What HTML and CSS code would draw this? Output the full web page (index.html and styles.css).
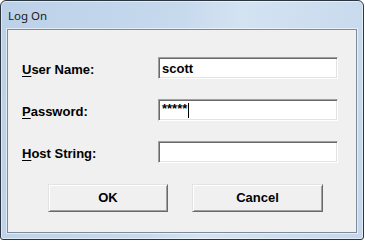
FILE: index.html
```html
<!DOCTYPE html>
<html>
<head>
<meta charset="utf-8">
<link rel="stylesheet" href="styles.css">
</head>
<body>
<div class="window">
  <div class="titlebar">Log On</div>
  <div class="client">
    <div class="form">
      <label class="label"><u>U</u>ser Name:</label>
      <div class="field">scott</div>
      <label class="label"><u>P</u>assword:</label>
      <div class="field"><span class="stars">*****</span><span class="caret"></span></div>
      <label class="label"><u>H</u>ost String:</label>
      <div class="field"></div>
    </div>
    <div class="buttons">
      <div class="btn btn-ok">OK</div>
      <div class="btn btn-cancel">Cancel</div>
    </div>
  </div>
</div>
</body>
</html>
```

FILE: styles.css
```css
html, body {
  margin: 0;
  padding: 0;
  background: #ffffff;
}
.window {
  width: 364px;
  height: 240px;
  border: 1px solid #2c3641;
  border-radius: 6px 6px 3px 3px;
  background: linear-gradient(100deg, #bcd1e8 0%, #c6d9ed 45%, #d4e3f2 60%, #c4d7ec 100%);
  box-shadow: inset 0 0 0 1px rgba(255,255,255,0.5);
  padding: 0 6px 6px 6px;
  box-sizing: border-box;
  display: flex;
  flex-direction: column;
}
.titlebar {
  height: 28px;
  flex: none;
  box-sizing: border-box;
  padding: 8px 0 0 1px;
  font-family: "Noto Sans", "Open Sans", sans-serif;
  font-size: 11.5px;
  line-height: 14px;
  color: #1a1a1a;
}
.client {
  flex: 1;
  background: #f0f0f0;
  border: 1px solid #7d8a97;
  box-shadow: 0 0 0 1px rgba(255,255,255,0.55);
  font-family: "Liberation Sans", Arial, sans-serif;
  font-weight: bold;
  font-size: 13px;
  color: #000;
}
.form {
  display: grid;
  grid-template-columns: 136px 180px;
  grid-auto-rows: 22px;
  row-gap: 20px;
  padding: 27px 0 0 14px;
  align-items: center;
}
.label {
  padding-top: 4px;
  line-height: 14px;
}
.label u {
  text-decoration-thickness: 1px;
  text-underline-offset: 2px;
}
.field {
  height: 22px;
  box-sizing: border-box;
  background: #fff;
  border: 1px solid;
  border-color: #a0a0a0 #ffffff #ffffff #a0a0a0;
  box-shadow: inset 1px 1px 0 #696969, inset -1px -1px 0 #e3e3e3;
  padding: 3px 0 0 3px;
  line-height: 15px;
  display: flex;
  align-items: flex-start;
}
.stars {
  font-size: 13px;
  line-height: 12px;
  letter-spacing: 0;
}
.caret {
  display: inline-block;
  width: 1px;
  height: 15px;
  background: #000;
  margin-left: 1px;
}
.buttons {
  display: flex;
  gap: 24px;
  padding: 21px 0 0 40px;
}
.btn {
  height: 28px;
  box-sizing: border-box;
  border: 1px solid;
  border-color: #e3e3e3 #696969 #696969 #e3e3e3;
  box-shadow: inset 1px 1px 0 #ffffff, inset -1px -1px 0 #a0a0a0;
  background: #f0f0f0;
  display: flex;
  align-items: center;
  justify-content: center;
  padding-bottom: 1px;
}
.btn-ok { width: 120px; }
.btn-cancel { width: 131px; }
```
